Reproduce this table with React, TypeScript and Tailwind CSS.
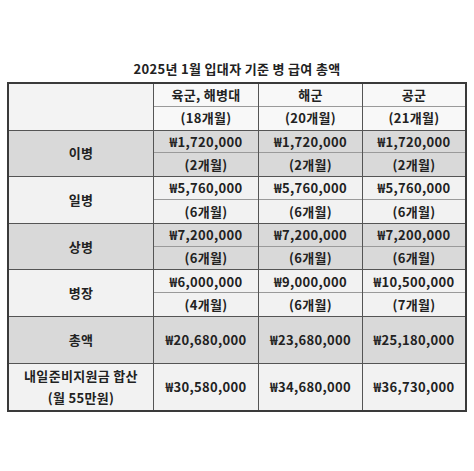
import React from "react";

type Group = {
  label: string[];
  values: string[];
  months?: string[];
  shade: "gray" | "light";
};

const groups: Group[] = [
  {
    label: ["이병"],
    values: ["₩1,720,000", "₩1,720,000", "₩1,720,000"],
    months: ["(2개월)", "(2개월)", "(2개월)"],
    shade: "gray",
  },
  {
    label: ["일병"],
    values: ["₩5,760,000", "₩5,760,000", "₩5,760,000"],
    months: ["(6개월)", "(6개월)", "(6개월)"],
    shade: "light",
  },
  {
    label: ["상병"],
    values: ["₩7,200,000", "₩7,200,000", "₩7,200,000"],
    months: ["(6개월)", "(6개월)", "(6개월)"],
    shade: "gray",
  },
  {
    label: ["병장"],
    values: ["₩6,000,000", "₩9,000,000", "₩10,500,000"],
    months: ["(4개월)", "(6개월)", "(7개월)"],
    shade: "light",
  },
  {
    label: ["총액"],
    values: ["₩20,680,000", "₩23,680,000", "₩25,180,000"],
    shade: "gray",
  },
  {
    label: ["내일준비지원금 합산", "(월 55만원)"],
    values: ["₩30,580,000", "₩34,680,000", "₩36,730,000"],
    shade: "light",
  },
];

const headers = [
  ["육군, 해병대", "(18개월)"],
  ["해군", "(20개월)"],
  ["공군", "(21개월)"],
];

export default function App() {
  return (
    <div
      className="w-[474px] h-[471px] bg-white flex flex-col items-center pt-[59px] text-[#222] tracking-[0.02em]"
      style={{ fontFamily: '"Noto Sans CJK KR", "Noto Sans", sans-serif' }}
    >
      <h1 className="text-[13px] font-bold leading-[20px] mb-[3px]">
        2025년 1월 입대자 기준 병 급여 총액
      </h1>
      <div className="border-2 border-[#3a3a3a] grid grid-cols-[145px_105px_104px_102px] grid-rows-[repeat(14,23.3px)] text-[13px] font-bold">
        <div className="row-span-2 bg-[#f3f3f3] border-r border-b border-[#555]" />
        {headers.map((h, i) => (
          <div
            key={h[0]}
            className={`row-span-2 grid grid-rows-2 bg-[#f8f8f8] border-b border-[#555] ${i < 2 ? "border-r" : ""}`}
          >
            <div className="flex items-center justify-center border-b border-[#9a9a9a]">{h[0]}</div>
            <div className="flex items-center justify-center">{h[1]}</div>
          </div>
        ))}
        {groups.map((g, gi) => {
          const bg = g.shade === "gray" ? "bg-[#d9d9d9]" : "bg-[#f2f2f2]";
          const last = gi === groups.length - 1;
          return (
            <React.Fragment key={g.label[0]}>
              <div
                className={`row-span-2 flex flex-col items-center justify-center border-r border-[#555] leading-[22px] ${bg} ${last ? "" : "border-b"}`}
              >
                {g.label.map((l) => (
                  <span key={l}>{l}</span>
                ))}
              </div>
              {g.values.map((v, i) => (
                <div
                  key={i}
                  className={`row-span-2 grid ${g.months ? "grid-rows-2" : ""} border-[#555] ${bg} ${i < 2 ? "border-r" : ""} ${last ? "" : "border-b"}`}
                >
                  <div
                    className={`flex items-center justify-center ${g.months ? "border-b border-[#9a9a9a]" : ""}`}
                  >
                    {v}
                  </div>
                  {g.months && (
                    <div className="flex items-center justify-center">{g.months[i]}</div>
                  )}
                </div>
              ))}
            </React.Fragment>
          );
        })}
      </div>
    </div>
  );
}
